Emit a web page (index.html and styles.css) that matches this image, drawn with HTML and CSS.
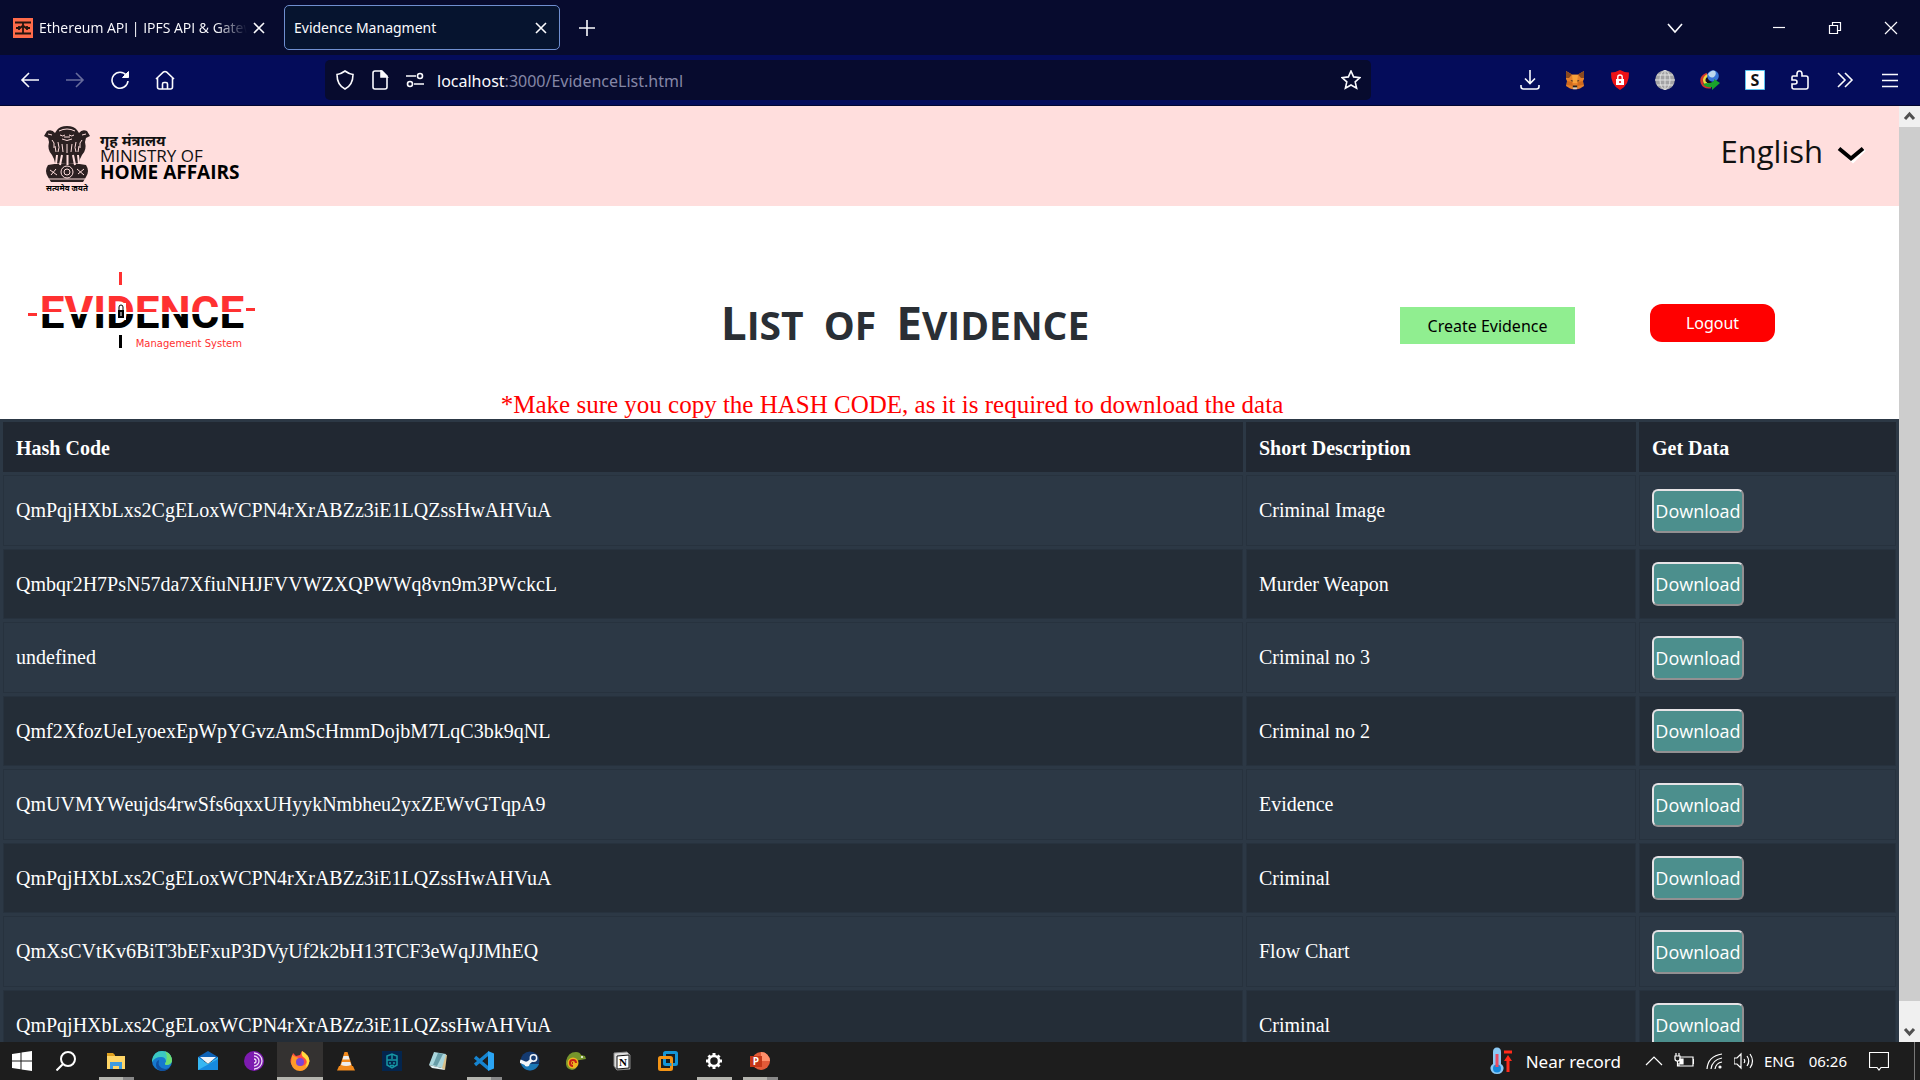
FILE: index.html
```html
<!DOCTYPE html>
<html lang="en">
<head>
<meta charset="utf-8">
<title>Evidence Managment</title>
<link rel="stylesheet" href="styles.css">
</head>
<body>
<header class="browser">
  <div class="tabstrip">
    <div class="tab tab-idle">
      <svg class="favicon" viewBox="0 0 20 20"><path fill="#ff6b4a" d="M0 0h20v20H0z"/><path d="M2 4.500h16M2 15.500h16M10 4.500v11M3 10h4l3-2.500 3 2.500h4M6 8v4M14 8v4" stroke="#24150f" stroke-width="1.800" fill="none"/></svg>
      <span class="tab-title fade">Ethereum API | IPFS API &amp; Gatew</span>
      <button class="tab-close" aria-label="Close tab"><svg viewBox="0 0 12 12"><path d="M1 1l10 10M11 1L1 11"/></svg></button>
    </div>
    <div class="tab tab-active">
      <span class="tab-title">Evidence Managment</span>
      <button class="tab-close" aria-label="Close tab"><svg viewBox="0 0 12 12"><path d="M1 1l10 10M11 1L1 11"/></svg></button>
    </div>
    <button class="tab-new" aria-label="New tab"><svg viewBox="0 0 16 16"><path d="M8 0v16M0 8h16"/></svg></button>
    <button class="tab-list" aria-label="List all tabs"><svg viewBox="0 0 16 16"><path d="M1 4l7 8 7-8"/></svg></button>
    <div class="window-controls">
      <button aria-label="Minimize"><svg viewBox="0 0 14 14"><path d="M1 6.500h12"/></svg></button>
      <button aria-label="Restore"><svg viewBox="0 0 14 14"><path d="M1.500 4.500h8v8h-8zM4.500 4V1.500h8v8H10"/></svg></button>
      <button aria-label="Close"><svg viewBox="0 0 14 14"><path d="M1 1l12 12M13 1L1 13"/></svg></button>
    </div>
  </div>
  <div class="toolbar">
    <nav class="nav-buttons">
      <button aria-label="Back"><svg viewBox="0 0 20 20"><path d="M19 10H2M9 3l-7 7 7 7"/></svg></button>
      <button class="dim" aria-label="Forward"><svg viewBox="0 0 20 20"><path d="M1 10h17M11 3l7 7-7 7"/></svg></button>
      <button aria-label="Reload"><svg viewBox="0 0 20 20"><path d="M16.500 5.500A8 8 0 1 0 18 11"/><path d="M18.500 1.500v6h-6z" fill="#fbfbfe" stroke-width="1"/></svg></button>
      <button aria-label="Home"><svg viewBox="0 0 20 20"><path d="M1 9l7.500-7q1.500-1 3 0L19 9M2.500 8v9q0 2 2 2h11q2 0 2-2V8M7.500 19v-5q0-1.500 1.500-1.500h2q1.500 0 1.500 1.500v5"/></svg></button>
    </nav>
    <div class="urlbar">
      <svg class="icon" viewBox="0 0 20 20"><path d="M10 1q4 3 8 3.500Q18 15 10 19 2 15 2 4.500 6 4 10 1z"/></svg>
      <svg class="icon" viewBox="0 0 20 20"><path d="M5 1h7l5 5v11q0 2-2 2H5q-2 0-2-2V3q0-2 2-2z"/><path d="M11 1v6h6z" fill="#fbfbfe"/></svg>
      <svg class="icon" viewBox="0 0 20 20"><path d="M1 6h10M9 14h10"/><circle cx="15" cy="6" r="2.500"/><circle cx="5" cy="14" r="2.500"/></svg>
      <a class="url" href="#top">localhost<span class="url-path">:3000/EvidenceList.html</span></a>
      <button class="star" aria-label="Bookmark"><svg viewBox="0 0 20 20"><path d="M10 1l2.600 5.900 6.400.7-4.800 4.200 1.400 6.400L10 15l-5.600 3.200 1.400-6.400L1 7.600l6.400-.7z"/></svg></button>
    </div>
    <div class="extensions">
      <button aria-label="Downloads"><svg viewBox="0 0 20 20"><path d="M10 0v13M5 8.500l5 5 5-5M1 15v1.500Q1 19 3.500 19h13q2.500 0 2.500-2.500V15"/></svg></button>
      <button aria-label="MetaMask"><svg class="color" viewBox="0 0 20 20"><path fill="#e8822a" d="M1 1l6 3.500h6L19 1v8l-1 2 1 5-4 2.500-3 .8H8L5 18.500 1 16l1-5-1-2z"/><path fill="#8b4a1f" d="M1 1l6 3.500L4 8H1zM19 1l-6 3.500L16 8h3z"/><path fill="#f7a23b" d="M7 5h6l-1 8H8z"/><path fill="#d06a1c" d="M2 11l5 1 1 4-6-1zM18 11l-5 1-1 4 6-1z"/><path fill="#222" d="M5.500 10l2.500.8-1 1zM14.500 10l-2.500.8 1 1zM8 15.500h4l.4 2H7.600z"/><path fill="#d8cfc8" d="M7.600 17.500h4.800l-.8 1.800H8.400z"/></svg></button>
      <button aria-label="Ad blocker"><svg class="color" viewBox="0 0 20 20"><path fill="#ed1115" d="M10 0q5 2.500 9 2.500Q19.500 15 10 20 .500 15 1 2.500 5 2.500 10 0z"/><path fill="#fff" d="M6 9h8v6H6z"/><path d="M7.800 9V7q0-2 2.200-2t2.200 2v2" stroke="#fff" stroke-width="1.400" fill="none"/><path stroke="#ed1115" d="M10 11v2"/></svg></button>
      <button aria-label="Translate"><svg class="color" viewBox="0 0 20 20"><circle cx="10" cy="10" r="9.800" fill="#a3a3a5"/><g fill="none" stroke="#e2e2e2" stroke-width="1"><path d="M10 0v20M0 10h20M2 5h16M2 15h16"/><ellipse cx="10" cy="10" rx="5" ry="9.500"/></g></svg></button>
      <button aria-label="Download manager"><svg class="color" viewBox="0 0 20 20"><path d="M7 4Q0 7 2 13q2 5 9 4" fill="none" stroke="#d3372b" stroke-width="2.500"/><path d="M8 5Q3 8 4.500 12q2 3 6 3" fill="none" stroke="#f3d93b" stroke-width="2.500"/><path d="M9 7q-3 3-1 5l3 1" fill="none" stroke="#111" stroke-width="2"/><circle cx="13" cy="6" r="5.800" fill="#3674d8"/><path fill="#bcd7ee" d="M8 4q4-5 7-3 2 3-1 6-4 2-6-3z"/><path fill="#19a32a" d="M6 13q4 1 8-2v-2l6 4-8 7v-3q-6 1-9-3 2 0 3-1z"/></svg></button>
      <button aria-label="Stylus"><svg class="color" viewBox="0 0 20 20"><path fill="#fff" stroke="#5bc3ee" stroke-width="1" d="M.5.5h19v19H.5z"/><text x="10" y="16" text-anchor="middle" class="stylus-letter">S</text></svg></button>
      <button aria-label="Extensions"><svg viewBox="0 0 20 20"><path d="M3 6h4V4q0-3 2.500-3T12 4v2h4q2 0 2 2v9q0 2-2 2H4q-2 0-2-2v-3h3q2 0 2-2t-2-2H2V7.500Q2 6 3 6z"/></svg></button>
      <button aria-label="More tools"><svg viewBox="0 0 20 20"><path d="M3 3l7 7-7 7M10 3l7 7-7 7"/></svg></button>
      <button aria-label="Menu"><svg viewBox="0 0 20 20"><path d="M2 4.500h16M2 10.500h16M2 16.500h16"/></svg></button>
    </div>
  </div>
</header>

<div class="viewport">
  <main class="page" id="top">
    <div class="ministry">
      <div class="ministry-brand">
        <figure class="emblem">
          <svg viewBox="0 0 46 56">
            <g fill="#2b2021">
              <path d="M13 4q3-4 10-4t10 4l2 3q3-4 8-2l3 5-4 2-1 4q2 8-3 13-2 3-3 8H11q-1-5-3-8-5-5-3-13l-1-4-4-2 3-5q5-2 8 2z"/>
              <path d="M4 39q19-4 38 0 4 6 0 12l-3 5H7l-3-5q-4-6 0-12z"/>
            </g>
            <g fill="none" stroke="#ffdedd" stroke-width="1">
              <path d="M15 5q8-4 16 0M16 9q3 2 5 0M25 9q3 2 5 0M18 13q5 3 10 0M20 11h6M4 8l4 1M42 8l-4 1M8 14q3 2 2 8M38 14q-3 2-2 8M14 16q2 6 0 10M32 16q-2 6 0 10M18 18l1 8M23 18v9M28 18l-1 8M11 20l1 6M35 20l-1 6"/>
              <path stroke-width="2" d="M13 29l-1 9M18 29l-2 10M23.500 29v10M29 29l2 10M34 29l1 9"/>
              <circle cx="23" cy="46" r="6"/><circle cx="23" cy="46" r="3"/>
              <path d="M6 44l7 5M7 49l5-6M33 43l7 6M40 43l-6 5M5 53h36"/>
            </g>
          </svg>
          <figcaption lang="hi">सत्यमेव जयते</figcaption>
        </figure>
        <div class="ministry-name">
          <span class="name-hi" lang="hi">गृह मंत्रालय</span>
          <span class="name-thin">MINISTRY OF</span>
          <strong class="name-bold">HOME AFFAIRS</strong>
        </div>
      </div>
      <button class="language">English
        <svg viewBox="0 0 28 14"><path d="M4 4l12 11L28 3" stroke="#fff" stroke-width="2"/><path d="M2 1.500l12 10 12-10" stroke="#000" stroke-width="4"/></svg>
      </button>
    </div>

    <section class="title-row">
      <svg class="evidence-logo" viewBox="0 0 228 80" role="img" aria-label="Evidence Management System">
        <defs>
          <linearGradient id="split" gradientUnits="userSpaceOnUse" x1="0" y1="20" x2="0" y2="60">
            <stop offset="0" stop-color="#ff3131"/><stop offset=".54" stop-color="#ff3131"/>
            <stop offset=".54" stop-color="#fff"/><stop offset=".59" stop-color="#fff"/>
            <stop offset=".59" stop-color="#000"/><stop offset="1" stop-color="#000"/>
          </linearGradient>
        </defs>
        <text class="logo-word" x="114" y="58" text-anchor="middle" fill="url(#split)">EVIDENCE</text>
        <path fill="#ff3131" d="M91 2h3v13h-3zM0 43h9v3H0zM218 38h9v3h-9z"/>
        <path d="M91 65h3v13h-3z"/>
        <path fill="#fff" d="M88 33h10v17H88z"/><path d="M90 40h6v8h-6z"/>
        <path d="M91 41v-4q0-2 2-2t2 2v4" fill="none" stroke="#000"/><path stroke="#fff" d="M93 42v4"/>
        <text class="logo-sub" x="214" y="77" text-anchor="end">Management System</text>
      </svg>
      <h1 class="page-title"><span>List</span> <span>of</span> <span>Evidence</span></h1>
      <button class="create">Create Evidence</button>
      <button class="logout">Logout</button>
    </section>
    <p class="notice">*Make sure you copy the HASH CODE, as it is required to download the data</p>

    <table class="evidence">
      <colgroup><col class="col-hash"><col class="col-desc"><col></colgroup>
      <thead><tr><th>Hash Code</th><th>Short Description</th><th>Get Data</th></tr></thead>
      <tbody>
        <tr><td>QmPqjHXbLxs2CgELoxWCPN4rXrABZz3iE1LQZssHwAHVuA</td><td>Criminal Image</td><td><button class="download">Download</button></td></tr>
        <tr><td>Qmbqr2H7PsN57da7XfiuNHJFVVWZXQPWWq8vn9m3PWckcL</td><td>Murder Weapon</td><td><button class="download">Download</button></td></tr>
        <tr><td>undefined</td><td>Criminal no 3</td><td><button class="download">Download</button></td></tr>
        <tr><td>Qmf2XfozUeLyoexEpWpYGvzAmScHmmDojbM7LqC3bk9qNL</td><td>Criminal no 2</td><td><button class="download">Download</button></td></tr>
        <tr><td>QmUVMYWeujds4rwSfs6qxxUHyykNmbheu2yxZEWvGTqpA9</td><td>Evidence</td><td><button class="download">Download</button></td></tr>
        <tr><td>QmPqjHXbLxs2CgELoxWCPN4rXrABZz3iE1LQZssHwAHVuA</td><td>Criminal</td><td><button class="download">Download</button></td></tr>
        <tr><td>QmXsCVtKv6BiT3bEFxuP3DVyUf2k2bH13TCF3eWqJJMhEQ</td><td>Flow Chart</td><td><button class="download">Download</button></td></tr>
        <tr><td>QmPqjHXbLxs2CgELoxWCPN4rXrABZz3iE1LQZssHwAHVuA</td><td>Criminal</td><td><button class="download">Download</button></td></tr>
      </tbody>
    </table>
  </main>
  <div class="scrollbar" aria-hidden="true">
    <svg viewBox="0 0 21 21"><path d="M6 13l4.500-5 4.500 5"/></svg>
    <div class="thumb"></div>
    <svg viewBox="0 0 21 21"><path d="M6 8l4.500 5L15 8"/></svg>
  </div>
</div>

<footer class="taskbar">
  <div class="system-buttons">
    <button aria-label="Start"><svg viewBox="0 0 20 20"><path fill="#fff" d="M0 3l8.500-1.300v7.800H0zM9.500 1.500L20 0v9.500H9.500zM0 10.500h8.500v7.800L0 17zM9.500 10.500H20V20L9.500 18.500z"/></svg></button>
    <button aria-label="Search"><svg viewBox="0 0 20 20"><circle cx="12" cy="8" r="7" fill="none" stroke="#fff" stroke-width="2"/><path d="M7 13l-6.500 6.500" stroke="#fff" stroke-width="2"/></svg></button>
  </div>
  <div class="apps">
    <button class="open multi" aria-label="File Explorer"><svg viewBox="0 0 20 20"><path fill="#e0a220" d="M1 2h6l2 2v4H1z"/><path fill="#ffd667" d="M1 5h18v13H1z"/><path fill="#3d9be0" d="M4 11h12v7h-3v-3H7v3H4z"/></svg></button>
    <button aria-label="Edge"><svg viewBox="0 0 20 20"><circle cx="10" cy="10" r="10" fill="#1679ce"/><path fill="#3bc8c1" d="M0 9Q2 0 10 0q9 0 10 9 0 5-6 5-2-1 0-3 0-5-5-5-6 0-9 5z"/><path fill="#6fdd70" d="M13 .500Q20 3 20 10q-1 4-6 4-2-1 0-3Q16 5 13 .500z"/><path fill="#1050a0" d="M7 9q-2 8 6 9 4 0 6-3-3 5-9 5-6-1-6-6 0-4 3-5z"/></svg></button>
    <button aria-label="Mail"><svg viewBox="0 0 20 20"><path fill="#0e62b6" d="M0 6l10-6 10 6v4H0z"/><path fill="#f1f4f8" d="M2 6h16l-8 7z"/><path fill="#37b7f2" d="M0 6l10 7 10-7v13H0z"/><path fill="#168be0" d="M0 19L20 8v11z"/></svg></button>
    <button aria-label="Tor Browser"><svg viewBox="0 0 20 20"><circle cx="10" cy="10" r="10" fill="#7d1bb0"/><g fill="none" stroke="#eedcf5" stroke-width="1.300"><path d="M10 2a8 8 0 0 1 0 16M10 5a5 5 0 0 1 0 10M10 8a2 2 0 0 1 0 4"/></g></svg></button>
    <button class="open current" aria-label="Firefox"><svg viewBox="0 0 20 20"><path fill="#ff4a43" d="M2 5l1-3 3 3 4-1 2-4q7 4 7.500 10A9.600 9.600 0 0 1 .500 11Q0 8 2 5z"/><path fill="#ff9a28" d="M2 4l4 2 3 1-2 2q0 6 5 6 6-1 5-9 3 5 1 9-3 5-8 5-7 0-9-8z"/><path fill="#ffdc3d" d="M12 0q7 4 7.500 10-1 5-4 6 3-6-1-9-4-2-2.500-7z"/><circle cx="10" cy="11" r="4" fill="#7b46d5"/></svg></button>
    <button aria-label="VLC"><svg viewBox="0 0 20 20"><path fill="#f28a1c" d="M3 15h14l2 4.500H1zM8.500 1h3l4.500 14q-6 3-12 0z"/><path fill="#eee" d="M7.500 5h5l1 3.500h-7zM6 11h8.200l1 3q-5 2-10.200 0z"/></svg></button>
    <button aria-label="Robot app"><svg viewBox="0 0 20 20"><path fill="#04254d" d="M0 0h20v20H0z"/><path fill="none" stroke="#1696a4" stroke-width="1.500" d="M5 5l5-2 5 2v9l-5 3-5-3zM10 3v5M5 9h10M7 12h2M11 12h2M8 14.500h4"/></svg></button>
    <button aria-label="Notepad"><svg viewBox="0 0 20 20"><path fill="#d9c18c" d="M15 3l4 1-2 15-4-2z"/><path fill="#a9d6dd" d="M6 1l12 2-4 14-13-3z"/><path fill="#e6f3f5" d="M1 14l13 3 3 2-13-2z"/><path fill="#679da8" d="M10 2l5 1-6 12-4-1z"/></svg></button>
    <button class="open multi" aria-label="Visual Studio Code"><svg viewBox="0 0 20 20"><path d="M1 6l14 12M1 14L15 2" stroke="#1684d0" stroke-width="3.500"/><path fill="#2ba5f4" d="M14 0l6 2.500v15L14 20z"/><path fill="#1e1e1e" d="M14 6v8l-5-4z"/></svg></button>
    <button aria-label="Steam"><svg viewBox="0 0 20 20"><circle cx="10" cy="10" r="9.500" fill="#143a70"/><path fill="#1b78b5" d="M1 13h18q-3 6.500-9 6.500T1 13z"/><path d="M0 10l7 3 7-6" stroke="#f4f6f8" stroke-width="3.500" fill="none"/><circle cx="13.500" cy="7" r="3.200" fill="#143a70" stroke="#f4f6f8" stroke-width="1.500"/><circle cx="7" cy="13" r="2.500" fill="#f4f6f8"/></svg></button>
    <button aria-label="Chameleon app"><svg viewBox="0 0 20 20"><path fill="#76962c" d="M0 10Q2 1 10 1q4 0 5 3l4 1 1 3-6 1-5 1q4 8-3 9-7-1-6-9z"/><circle cx="7" cy="12" r="5.500" fill="#efb321"/><path d="M10 12a3 3 0 1 0-3 3M7 12h-1" stroke="#c51f16" stroke-width="2" fill="none"/><circle cx="16" cy="6" r="1" fill="#fff"/></svg></button>
    <button aria-label="Notion"><svg viewBox="0 0 20 20"><path fill="#ddd" stroke="#888" d="M2 2l13-1 3 3v14l-13 1-3-4z"/><path fill="#fff" stroke="#111" d="M5 5l12-1v13l-12 1z"/><text class="notion-letter" x="11" y="15" text-anchor="middle">N</text></svg></button>
    <button aria-label="VMware"><svg viewBox="0 0 20 20"><g fill="none" stroke-width="3"><rect x="6.500" y="1.500" width="12" height="12" rx="1" stroke="#1496d8"/><rect x="1.500" y="6.500" width="12" height="12" rx="1" stroke="#f49415"/><path d="M13.500 13.500H10" stroke="#1496d8"/></g></svg></button>
    <button class="open" aria-label="Settings"><svg viewBox="0 0 20 20"><circle cx="10" cy="10" r="5" fill="none" stroke="#fff" stroke-width="2.500"/><path d="M10 5V2M10 15v3M5 10H2M15 10h3M6.500 6.500l-2-2M13.500 13.500l2 2M13.500 6.500l2-2M6.500 13.500l-2 2" stroke="#fff" stroke-width="3"/></svg></button>
    <button class="open multi" aria-label="PowerPoint"><svg viewBox="0 0 20 20"><circle cx="11" cy="10" r="9" fill="#e25a38"/><path fill="#ff8f6b" d="M11 1a9 9 0 0 1 9 9h-9z"/><path fill="#c43719" d="M0 5h12v11H0z"/><text class="ppt-letter" x="6" y="14" text-anchor="middle">P</text></svg></button>
  </div>
  <div class="tray">
    <button class="weather"><svg viewBox="0 0 22 28"><path d="M3 5q0-4.500 4-4.500t4 4.500v12q3 2 2.500 5-1 5-6.500 5T.500 22Q0 19 3 17z" fill="#8ccaf5"/><circle cx="7" cy="21.500" r="4" fill="#1487dc"/><path d="M7 7v13" stroke="#e94b63" stroke-width="3"/><path d="M14 5h8" stroke="#ff2a1a" stroke-width="3"/><path d="M18 8l4 6h-2.500v11h-3V14H14z" fill="#ff2a1a"/></svg>Near record</button>
    <svg class="line" viewBox="0 0 20 20"><path d="M2 14l8-8 8 8"/></svg>
    <svg class="line" viewBox="0 0 20 20"><path d="M6 6h13v9H5v-3M1 5h5v3q0 2-2.500 2T1 8zM2 2v3M5 2v3M3.500 10v5H5M19.500 8v5"/><path fill="#fff" d="M6 8h3v5H6z"/></svg>
    <svg class="line" viewBox="0 0 20 20"><path d="M3 18Q4 5 18 3M7 18Q8 9 18 7M11 18q1-6 7-7"/><circle cx="16" cy="16" r="1" fill="#fff"/></svg>
    <svg class="line" viewBox="0 0 20 20"><path d="M0 7h3l4-4v14l-4-4H0zM10 8q1.500 2 0 4M13 5q3.500 5 0 10M16 3q5 7 0 14"/></svg>
    <span class="lang">ENG</span>
    <time class="clock">06:26</time>
    <svg class="line action" viewBox="0 0 20 20"><path d="M.5 1.500h19v15H12l-2 2.500-2-2.500H.5z"/></svg>
  </div>
</footer>
</body>
</html>
```
FILE: styles.css
```css
* { box-sizing: border-box; }

body {
  margin: 0;
  height: 100vh;
  display: flex;
  flex-direction: column;
  overflow: hidden;
  font-family: "Noto Sans", "Open Sans", sans-serif;
}

button {
  display: flex;
  align-items: center;
  justify-content: center;
  padding: 0;
  border: 0;
  background: none;
  color: inherit;
  font-family: inherit;
}

svg { display: block; flex: none; }

/* Browser chrome */
.browser {
  color: #fbfbfe;
  background: #070b2e;
}

.browser svg {
  fill: none;
  stroke: #fbfbfe;
  stroke-width: 1.6;
}

.browser svg.color,
.browser svg.favicon { stroke: none; }

.tabstrip {
  display: flex;
  align-items: center;
  height: 55px;
  padding: 0 1px 0 5px;
}

.tab {
  display: flex;
  align-items: center;
  height: 45px;
  font-size: 14px;
}

.tab-idle {
  width: 268px;
  padding: 0 8px;
  gap: 6px;
  font-family: "Open Sans", sans-serif;
}

.tab-active {
  width: 276px;
  margin-left: 11px;
  padding: 0 12px 0 9px;
  border: 1px solid #6f8fd0;
  border-radius: 5px;
  background: #06142f;
}

.favicon { width: 20px; height: 20px; }

.tab-title {
  flex: 1;
  min-width: 0;
  overflow: hidden;
  white-space: nowrap;
}

.fade {
  -webkit-mask-image: linear-gradient(90deg, #000 85%, transparent);
  mask-image: linear-gradient(90deg, #000 85%, transparent);
}

.tab-close svg { width: 12px; height: 12px; }
.tab-new { width: 54px; }
.tab-new svg,
.tab-list svg { width: 16px; height: 16px; }
.tab-list { width: 40px; margin-left: auto; }

.window-controls {
  display: flex;
  margin-left: 56px;
}

.window-controls button { width: 56px; height: 50px; }
.window-controls svg { width: 14px; height: 14px; stroke-width: 1.2; }

.toolbar {
  display: flex;
  align-items: center;
  height: 51px;
  padding: 0 8px 0 7px;
  background: #040c5a;
  border-bottom: 1px solid #02062f;
}

.nav-buttons { display: flex; }
.nav-buttons button { width: 45px; height: 40px; }
.nav-buttons svg,
.extensions svg,
.star svg,
.icon { width: 20px; height: 20px; }
.dim { opacity: .4; }

.urlbar {
  display: flex;
  align-items: center;
  flex: 1;
  gap: 15px;
  height: 40px;
  margin: 0 136px 0 138px;
  padding: 0 10px;
  border-radius: 5px;
  background: #070b2e;
}

.url {
  flex: 1;
  margin-left: -3px;
  padding-top: 2px;
  color: #fbfbfe;
  font-size: 16px;
  text-decoration: none;
}

.url-path { color: #8587a6; }

.extensions { display: flex; }
.extensions button { width: 45px; height: 40px; }
.stylus-letter { font: bold 16px "Open Sans", sans-serif; fill: #111; }

/* Page */
.viewport {
  display: flex;
  flex: 1;
  min-height: 0;
}

.page {
  flex: 1;
  overflow: hidden;
  background: #fff;
}

.ministry {
  display: flex;
  justify-content: space-between;
  height: 100px;
  padding: 20px 34px 0 44px;
  background: #ffdedd;
}

.ministry-brand {
  display: flex;
  align-items: flex-start;
  gap: 10px;
}

.emblem {
  display: flex;
  flex-direction: column;
  align-items: center;
  width: 46px;
  margin: 0;
}

.emblem svg { width: 46px; height: 56px; }

.emblem figcaption {
  font-size: 8px;
  font-weight: 700;
  line-height: 12px;
  white-space: nowrap;
}

.ministry-name {
  display: flex;
  flex-direction: column;
  padding-top: 6px;
  color: #111;
  font-family: "Open Sans", "Noto Sans", sans-serif;
  line-height: 16px;
}

.name-hi { font-size: 15px; font-weight: 700; }
.name-thin { font-size: 17px; }
.name-bold { font-size: 19px; font-weight: 700; color: #000; }

.language {
  align-self: flex-start;
  gap: 14px;
  height: 50px;
  color: #111;
  font-family: "Open Sans", sans-serif;
  font-size: 31px;
}

.language svg { width: 28px; height: 14px; margin-top: 6px; fill: none; overflow: visible; }

.title-row {
  display: flex;
  align-items: center;
  height: 185px;
  padding: 22px 124px 0 28px;
}

.evidence-logo { width: 228px; height: 80px; overflow: visible; }
.logo-word { font: bold 44px Roboto, sans-serif; }
.logo-sub { font: 10px "DejaVu Sans", sans-serif; fill: #ff3131; }

.page-title {
  display: flex;
  flex: 1;
  align-items: baseline;
  justify-content: center;
  gap: 20px;
  margin: 28px 0 0;
  padding-left: 154px;
  color: #2a2f35;
  font: bold 39px/48px "Open Sans", sans-serif;
  text-transform: uppercase;
}

.page-title span:first-child::first-letter,
.page-title span:last-child::first-letter { font-size: 46px; }

.create {
  width: 175px;
  height: 37px;
  margin-top: 32px;
  color: #000;
  background: #90ee90;
  font-size: 16px;
}

.logout {
  width: 125px;
  height: 38px;
  margin: 26px 0 0 75px;
  border-radius: 12px;
  color: #fff;
  background: #f00;
  font-size: 16px;
}

.notice {
  margin: 0 115px 0 0;
  color: #f00;
  font: 25px/28px "Liberation Serif", serif;
  text-align: center;
}

.evidence {
  width: 100%;
  table-layout: fixed;
  border-spacing: 3px;
  color: #fff;
  background: #2c3845;
  font: 20px "Liberation Serif", serif;
}

.col-hash { width: 1240px; }
.col-desc { width: 390px; }

.evidence th,
.evidence td {
  padding: 0 12px;
  border: 1px solid #27323e;
  text-align: left;
}

.evidence th {
  height: 50px;
  padding-top: 2px;
  border-color: #212832;
  background: #212832;
}

.evidence td { height: 71px; }
.evidence tr:nth-child(even) td { height: 70px; background: #242d37; }

.download {
  width: 92px;
  height: 44px;
  border: 2px outset #e6e3e6;
  border-radius: 6px;
  color: #fff;
  background: #4c8f8d;
  font-family: "Open Sans", sans-serif;
  font-size: 18px;
}

.scrollbar {
  display: flex;
  flex-direction: column;
  width: 21px;
  background: #f0f0f0;
}

.scrollbar svg {
  width: 21px;
  height: 21px;
  fill: none;
  stroke: #505050;
  stroke-width: 3;
}

.thumb { height: 874px; min-height: 0; background: #cdcdcd; }
.scrollbar svg:last-child { margin-top: auto; }

/* Taskbar */
.taskbar {
  display: flex;
  height: 38px;
  color: #fff;
  background: #1d1d1d;
}

.system-buttons,
.apps,
.tray {
  display: flex;
  align-items: stretch;
}

.system-buttons { width: 93px; }
.system-buttons button { width: 44px; }

.taskbar svg { width: 20px; height: 20px; }

.apps button {
  width: 46px;
  border: solid transparent;
  border-width: 3px 0;
}

.apps .open {
  background: linear-gradient(#b4b4ae, #b4b4ae) center bottom / 35px 3px no-repeat border-box;
}

.apps .multi {
  background-image: linear-gradient(90deg, #b4b4ae 24px, #888 24px);
}

.apps .current {
  background-color: #343231;
  background-size: 46px 3px;
}

.notion-letter { font: bold 11px "Liberation Serif", serif; }
.ppt-letter { font: bold 10px "Open Sans", sans-serif; fill: #fff; }

.tray {
  align-items: center;
  gap: 10px;
  margin-left: auto;
  margin-right: 5px;
  padding-right: 25px;
  border-right: 1px solid #777;
  font-size: 15px;
}

.weather { gap: 14px; margin-right: 13px; font-size: 17px; }
.taskbar .weather svg { width: 22px; height: 28px; }
.line { fill: none; stroke: #fff; stroke-width: 1.2; }
.clock { margin: 0 12px 0 4px; }
```
